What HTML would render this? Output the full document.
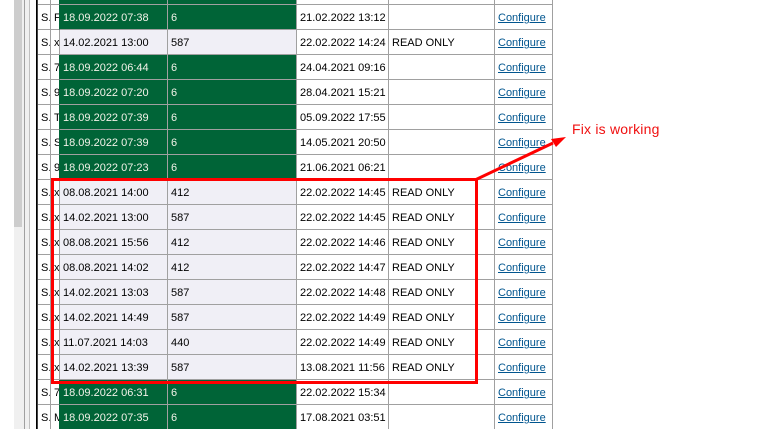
<!DOCTYPE html>
<html><head><meta charset="utf-8">
<style>
html,body{margin:0;padding:0;width:771px;height:429px;overflow:hidden;background:#fff}
body{position:relative;font-family:"Liberation Sans",sans-serif;font-size:11px;color:#000}
.a{position:absolute}
table{position:absolute;left:38px;top:-20px;border-collapse:separate;border-spacing:0;table-layout:fixed;width:515px}
td{box-sizing:border-box;height:25px;padding:2px 0 0 3px;border-right:1px solid #a0a0a0;border-bottom:1px solid #a0a0a0;white-space:nowrap;overflow:hidden;background:#fff;line-height:22px}
tr.g td.d,tr.g td.c{background:#006437;color:#f2f2e8}
tr.g td.b{border-right-color:#006437}
tr.r td.d,tr.r td.c,tr.r td.e{background:#f0eff6}
a{color:#00558f;text-decoration:underline}
</style></head><body>
<div class="a" style="left:14px;top:0;width:8px;height:227px;background:#cdcdcd"></div>
<div class="a" style="left:14px;top:227px;width:8px;height:202px;background:#f0f0f0"></div>
<div class="a" style="left:22px;top:0;width:2px;height:429px;background:#f0f0f0"></div>
<div class="a" style="left:24px;top:0;width:1px;height:429px;background:#a0a0a0"></div>
<div class="a" style="left:25px;top:0;width:4px;height:429px;background:#f0f0f0"></div>
<div class="a" style="left:29px;top:0;width:1px;height:429px;background:#c0c0c0"></div>
<div class="a" style="left:36px;top:0;width:1px;height:429px;background:#000"></div>
<div class="a" style="left:37px;top:0;width:1px;height:429px;background:#444"></div>
<table>
<colgroup><col style="width:13px"><col style="width:9px"><col style="width:108px"><col style="width:129px"><col style="width:92px"><col style="width:106px"><col style="width:58px"></colgroup>
<tr class="g"><td>S.</td><td class="b">7</td><td class="d">18.09.2022 07:38</td><td class="c">6</td><td>21.02.2022 13:12</td><td></td><td><a>Configure</a></td></tr>
<tr class="g"><td>S.</td><td class="b">F</td><td class="d">18.09.2022 07:38</td><td class="c">6</td><td>21.02.2022 13:12</td><td></td><td><a>Configure</a></td></tr>
<tr class="r"><td>S.</td><td class="b">x</td><td class="d">14.02.2021 13:00</td><td class="c">587</td><td>22.02.2022 14:24</td><td>READ ONLY</td><td><a>Configure</a></td></tr>
<tr class="g"><td>S.</td><td class="b">7</td><td class="d">18.09.2022 06:44</td><td class="c">6</td><td>24.04.2021 09:16</td><td></td><td><a>Configure</a></td></tr>
<tr class="g"><td>S.</td><td class="b">9</td><td class="d">18.09.2022 07:20</td><td class="c">6</td><td>28.04.2021 15:21</td><td></td><td><a>Configure</a></td></tr>
<tr class="g"><td>S.</td><td class="b">T</td><td class="d">18.09.2022 07:39</td><td class="c">6</td><td>05.09.2022 17:55</td><td></td><td><a>Configure</a></td></tr>
<tr class="g"><td>S.</td><td class="b">S</td><td class="d">18.09.2022 07:39</td><td class="c">6</td><td>14.05.2021 20:50</td><td></td><td><a>Configure</a></td></tr>
<tr class="g"><td>S.</td><td class="b">9</td><td class="d">18.09.2022 07:23</td><td class="c">6</td><td>21.06.2021 06:21</td><td></td><td><a>Configure</a></td></tr>
<tr class="r"><td>S.</td><td class="b">x</td><td class="d">08.08.2021 14:00</td><td class="c">412</td><td>22.02.2022 14:45</td><td>READ ONLY</td><td><a>Configure</a></td></tr>
<tr class="r"><td>S.</td><td class="b">x</td><td class="d">14.02.2021 13:00</td><td class="c">587</td><td>22.02.2022 14:45</td><td>READ ONLY</td><td><a>Configure</a></td></tr>
<tr class="r"><td>S.</td><td class="b">x</td><td class="d">08.08.2021 15:56</td><td class="c">412</td><td>22.02.2022 14:46</td><td>READ ONLY</td><td><a>Configure</a></td></tr>
<tr class="r"><td>S.</td><td class="b">x</td><td class="d">08.08.2021 14:02</td><td class="c">412</td><td>22.02.2022 14:47</td><td>READ ONLY</td><td><a>Configure</a></td></tr>
<tr class="r"><td>S.</td><td class="b">x</td><td class="d">14.02.2021 13:03</td><td class="c">587</td><td>22.02.2022 14:48</td><td>READ ONLY</td><td><a>Configure</a></td></tr>
<tr class="r"><td>S.</td><td class="b">x</td><td class="d">14.02.2021 14:49</td><td class="c">587</td><td>22.02.2022 14:49</td><td>READ ONLY</td><td><a>Configure</a></td></tr>
<tr class="r"><td>S.</td><td class="b">x</td><td class="d">11.07.2021 14:03</td><td class="c">440</td><td>22.02.2022 14:49</td><td>READ ONLY</td><td><a>Configure</a></td></tr>
<tr class="r"><td>S.</td><td class="b">x</td><td class="d">14.02.2021 13:39</td><td class="c">587</td><td>13.08.2021 11:56</td><td>READ ONLY</td><td><a>Configure</a></td></tr>
<tr class="g"><td>S.</td><td class="b">7</td><td class="d">18.09.2022 06:31</td><td class="c">6</td><td>22.02.2022 15:34</td><td></td><td><a>Configure</a></td></tr>
<tr class="g"><td>S.</td><td class="b">M</td><td class="d">18.09.2022 07:35</td><td class="c">6</td><td>17.08.2021 03:51</td><td></td><td><a>Configure</a></td></tr>
</table>
<div class="a" style="left:51px;top:178px;width:427px;height:206px;box-sizing:border-box;border:3px solid #f00"></div>
<svg class="a" style="left:0;top:0" width="771" height="429" viewBox="0 0 771 429">
<path d="M475 180L553 143" stroke="#f00" stroke-width="3" fill="none"/>
<path d="M566 137L551 139L556 147Z" fill="#f00"/>
</svg>
<div class="a" style="left:572px;top:121px;font-size:14px;line-height:16px;letter-spacing:.2px;color:#f01010;white-space:nowrap">Fix is working</div>
</body></html>
